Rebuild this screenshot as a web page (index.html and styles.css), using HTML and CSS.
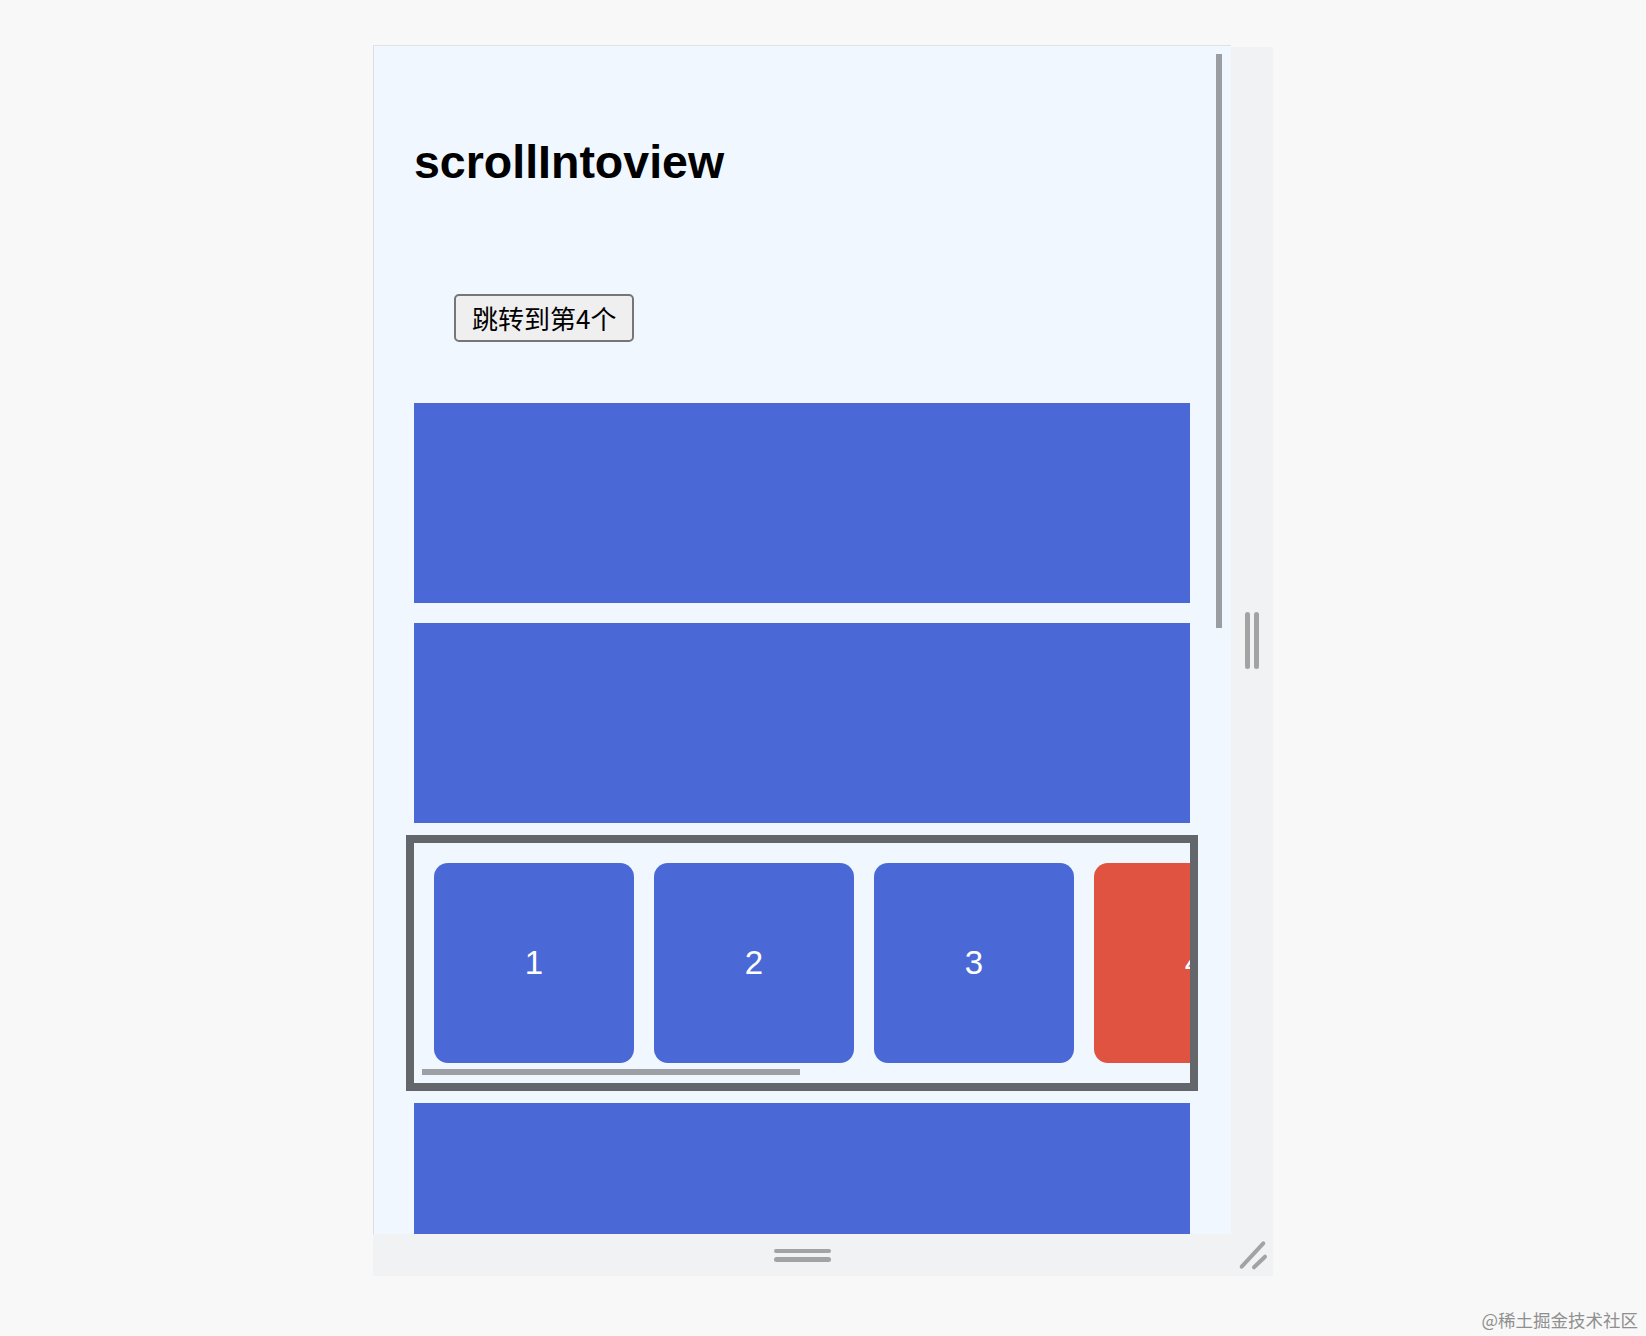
FILE: index.html
```html
<!DOCTYPE html>
<html lang="zh-CN">
<head>
<meta charset="utf-8">
<title>scrollIntoview</title>
<link rel="stylesheet" href="styles.css">
</head>
<body>
<div class="stage">
  <div class="frame">
    <div class="viewport">
      <div class="page">
        <h1 class="title">scrollIntoview</h1>
        <div class="actions">
          <button class="jump" type="button">跳转到第4个</button>
        </div>
        <div class="list">
          <div class="block"></div>
          <div class="block"></div>
          <div class="scroller">
            <div class="track">
              <div class="card">1</div>
              <div class="card">2</div>
              <div class="card">3</div>
              <div class="card card-active">4</div>
            </div>
            <div class="hthumb"></div>
          </div>
          <div class="block"></div>
          <div class="block"></div>
        </div>
      </div>
      <div class="vthumb"></div>
    </div>
    <div class="side">
      <div class="grip-v"><span></span><span></span></div>
    </div>
    <div class="bottom">
      <div class="grip-h"><span></span><span></span></div>
    </div>
    <div class="corner">
      <svg width="42" height="42" viewBox="0 0 42 42">
        <line x1="10.7" y1="32.7" x2="32.3" y2="9.3" stroke="#a3a3a3" stroke-width="4" stroke-linecap="round"/>
        <line x1="23" y1="33.3" x2="34" y2="22.7" stroke="#a3a3a3" stroke-width="4" stroke-linecap="round"/>
      </svg>
    </div>
  </div>
  <div class="watermark">@稀土掘金技术社区</div>
</div>
</body>
</html>
```

FILE: styles.css
```css
html, body {
  margin: 0;
  padding: 0;
}

body {
  background: #f8f8f8;
  font-family: "Liberation Sans", Arial, sans-serif;
}

.stage {
  position: relative;
  width: 1646px;
  height: 1336px;
  box-sizing: border-box;
  padding: 45px 0 0 373px;
  overflow: hidden;
}

.frame {
  display: grid;
  grid-template-columns: 858px 42px;
  grid-template-rows: 1189px 42px;
  width: 900px;
}

.viewport {
  position: relative;
  overflow: hidden;
  background: #f0f7ff;
  border-left: 1px solid #dcdcdc;
  border-top: 1px solid #e2e2e2;
}

.page {
  padding: 88px 41px 0 40px;
}

.title {
  margin: 0;
  font-family: "Liberation Sans", Arial, sans-serif;
  font-size: 46.5px;
  line-height: 56px;
  font-weight: 700;
  color: #000;
}

.actions {
  margin-top: 104px;
  padding-left: 40px;
}

.jump {
  font-family: "Noto Sans CJK SC", sans-serif;
  font-size: 26px;
  line-height: 30px;
  padding: 7px 16px;
  border: 2px solid #767676;
  border-radius: 5px;
  background: #efefef;
  color: #000;
}

.list {
  margin-top: 61px;
  display: flex;
  flex-direction: column;
  gap: 20px;
}

.block {
  height: 200px;
  background: #4a69d6;
  flex-shrink: 0;
}

.scroller {
  position: relative;
  height: 240px;
  outline: 8px solid #63676b;
  overflow: hidden;
  flex-shrink: 0;
}

.track {
  display: flex;
  gap: 20px;
  padding: 20px;
}

.card {
  flex: 0 0 200px;
  height: 200px;
  border-radius: 14px;
  background: #4a69d6;
  color: #fff;
  font-family: "Liberation Sans", Arial, sans-serif;
  font-size: 33px;
  display: flex;
  align-items: center;
  justify-content: center;
}

.card-active {
  background: #e05341;
}

.hthumb {
  position: absolute;
  left: 8px;
  bottom: 8px;
  width: 378px;
  height: 6px;
  background: #9c9fa3;
}

.vthumb {
  position: absolute;
  top: 8px;
  right: 9px;
  width: 6px;
  height: 574px;
  background: #9a9ea3;
}

.side {
  background: #f1f2f3;
  margin-top: 2px;
  display: flex;
  align-items: center;
  justify-content: center;
}

.grip-v {
  display: flex;
  gap: 4px;
}

.grip-v span {
  display: block;
  width: 5px;
  height: 57px;
  border-radius: 3px;
  background: #a3a3a3;
}

.bottom {
  background: #f1f2f3;
  display: flex;
  align-items: center;
  justify-content: center;
}

.grip-h {
  display: flex;
  flex-direction: column;
  gap: 4px;
}

.grip-h span {
  display: block;
  width: 57px;
  height: 4.5px;
  border-radius: 3px;
  background: #a3a3a3;
}

.corner {
  background: #f1f2f3;
}

.corner svg {
  display: block;
}

.watermark {
  position: absolute;
  right: 8px;
  bottom: 5px;
  font-family: "Noto Sans CJK SC", sans-serif;
  font-size: 17.5px;
  line-height: 22px;
  color: #8f8f8f;
}
```
